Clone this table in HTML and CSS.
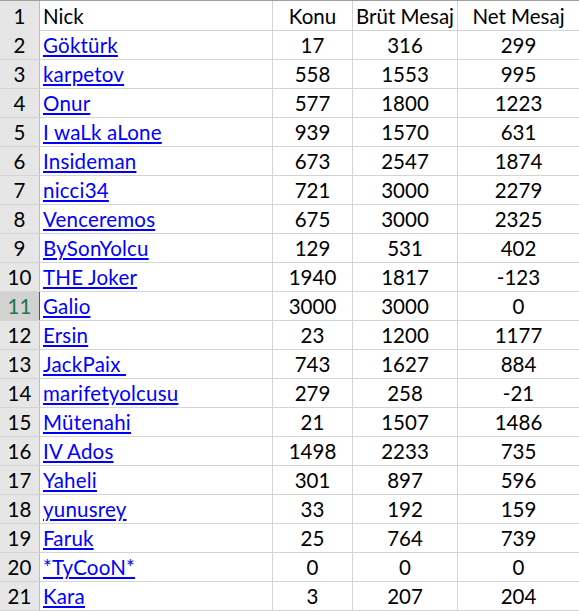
FILE: index.html
```html
<!DOCTYPE html>
<html>
<head>
<meta charset="utf-8">
<link rel="stylesheet" href="styles.css">
</head>
<body>
<div class="sheet">
  <div class="row first"><div class="rh">1</div><div class="c name">Nick</div><div class="c num">Konu</div><div class="c num">Brüt Mesaj</div><div class="c num last">Net Mesaj</div></div>
  <div class="row"><div class="rh">2</div><div class="c name"><a>Göktürk</a></div><div class="c num">17</div><div class="c num">316</div><div class="c num last">299</div></div>
  <div class="row"><div class="rh">3</div><div class="c name"><a>karpetov</a></div><div class="c num">558</div><div class="c num">1553</div><div class="c num last">995</div></div>
  <div class="row"><div class="rh">4</div><div class="c name"><a>Onur</a></div><div class="c num">577</div><div class="c num">1800</div><div class="c num last">1223</div></div>
  <div class="row"><div class="rh">5</div><div class="c name"><a>I waLk aLone</a></div><div class="c num">939</div><div class="c num">1570</div><div class="c num last">631</div></div>
  <div class="row"><div class="rh">6</div><div class="c name"><a>Insideman</a></div><div class="c num">673</div><div class="c num">2547</div><div class="c num last">1874</div></div>
  <div class="row"><div class="rh">7</div><div class="c name"><a>nicci34</a></div><div class="c num">721</div><div class="c num">3000</div><div class="c num last">2279</div></div>
  <div class="row"><div class="rh">8</div><div class="c name"><a>Venceremos</a></div><div class="c num">675</div><div class="c num">3000</div><div class="c num last">2325</div></div>
  <div class="row"><div class="rh">9</div><div class="c name"><a>BySonYolcu</a></div><div class="c num">129</div><div class="c num">531</div><div class="c num last">402</div></div>
  <div class="row"><div class="rh">10</div><div class="c name"><a>THE Joker</a></div><div class="c num">1940</div><div class="c num">1817</div><div class="c num last">-123</div></div>
  <div class="row"><div class="rh sel">11</div><div class="c name"><a>Galio</a></div><div class="c num">3000</div><div class="c num">3000</div><div class="c num last">0</div></div>
  <div class="row"><div class="rh">12</div><div class="c name"><a>Ersin</a></div><div class="c num">23</div><div class="c num">1200</div><div class="c num last">1177</div></div>
  <div class="row"><div class="rh">13</div><div class="c name"><a>JackPaix&nbsp;</a></div><div class="c num">743</div><div class="c num">1627</div><div class="c num last">884</div></div>
  <div class="row"><div class="rh">14</div><div class="c name"><a>marifetyolcusu</a></div><div class="c num">279</div><div class="c num">258</div><div class="c num last">-21</div></div>
  <div class="row"><div class="rh">15</div><div class="c name"><a>Mütenahi</a></div><div class="c num">21</div><div class="c num">1507</div><div class="c num last">1486</div></div>
  <div class="row"><div class="rh">16</div><div class="c name"><a>IV Ados</a></div><div class="c num">1498</div><div class="c num">2233</div><div class="c num last">735</div></div>
  <div class="row"><div class="rh">17</div><div class="c name"><a>Yaheli</a></div><div class="c num">301</div><div class="c num">897</div><div class="c num last">596</div></div>
  <div class="row"><div class="rh">18</div><div class="c name"><a>yunusrey</a></div><div class="c num">33</div><div class="c num">192</div><div class="c num last">159</div></div>
  <div class="row"><div class="rh">19</div><div class="c name"><a>Faruk</a></div><div class="c num">25</div><div class="c num">764</div><div class="c num last">739</div></div>
  <div class="row"><div class="rh">20</div><div class="c name"><a>*TyCooN*</a></div><div class="c num">0</div><div class="c num">0</div><div class="c num last">0</div></div>
  <div class="row"><div class="rh">21</div><div class="c name"><a>Kara</a></div><div class="c num">3</div><div class="c num">207</div><div class="c num last">204</div></div>
</div>
</body>
</html>
```

FILE: styles.css
```css
html, body {
  margin: 0;
  padding: 0;
  background: #ffffff;
}
.sheet {
  border-top: 1px solid #9f9f9f;
  font-family: Lato, "Open Sans", sans-serif;
  font-size: 20.5px;
  color: #000000;
}
.row {
  display: grid;
  grid-template-columns: 40px 233px 80px 105px 1fr;
  height: 29px;
  box-sizing: border-box;
  border-bottom: 1px solid #d4d4d4;
  line-height: 28px;
}
.row.first {
  height: 30px;
  line-height: 30px;
}
.rh {
  background: #e6e6e6;
  text-align: center;
  border-right: 1px solid #bdbdbd;
  box-sizing: border-box;
}
.rh.sel {
  background: #d2d2d2;
  color: #217346;
  border-right-color: #217346;
}
.c {
  border-right: 1px solid #d4d4d4;
  box-sizing: border-box;
  white-space: nowrap;
  overflow: hidden;
}
.c.last {
  border-right: none;
}
.name {
  padding-left: 3px;
}
.name a {
  letter-spacing: 0.2px;
}
.num {
  text-align: center;
}
a {
  color: #0000ff;
  text-decoration: underline;
}
```
